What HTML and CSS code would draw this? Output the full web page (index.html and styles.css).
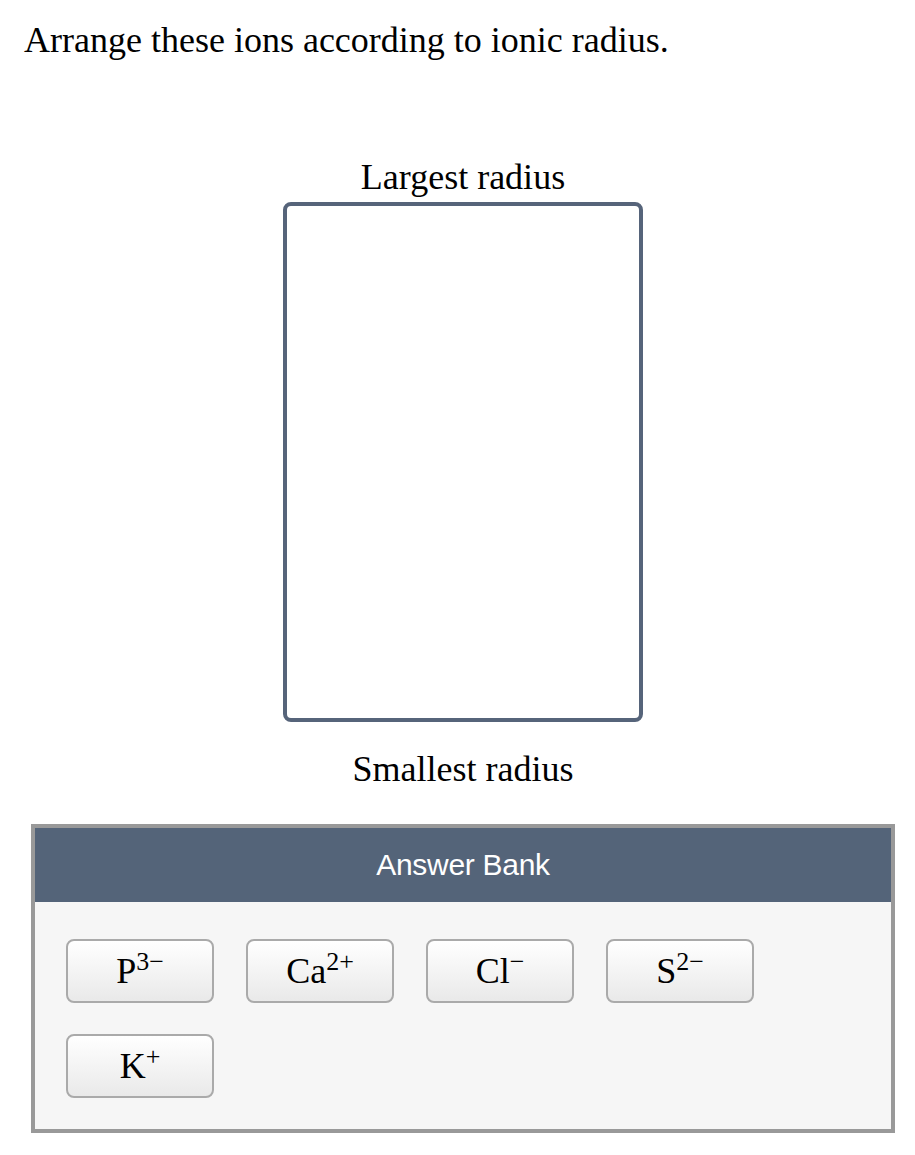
FILE: index.html
```html
<!DOCTYPE html>
<html>
  <head>
    <meta charset="utf-8">
    <title>Ionic radius</title>
    <link rel="stylesheet" href="styles.css">
  </head>
  <body>
    <p class="question">Arrange these ions according to ionic radius.</p>
    <div class="ranking">
      <div class="label">Largest radius</div>
      <div class="dropzone"></div>
      <div class="label">Smallest radius</div>
    </div>
    <div class="bank">
      <div class="bank-head">Answer Bank</div>
      <div class="bank-items">
        <div class="ion">P<sup>3&minus;</sup></div>
        <div class="ion">Ca<sup>2+</sup></div>
        <div class="ion">Cl<sup>&minus;</sup></div>
        <div class="ion">S<sup>2&minus;</sup></div>
        <div class="ion">K<sup>+</sup></div>
      </div>
    </div>
  </body>
</html>
```
FILE: styles.css
```css
body {
  margin: 0;
  background: #fff;
  color: #000;
  font-family: "Liberation Serif", "Times New Roman", serif;
}
.question {
  margin: 0;
  padding: 20px 0 0 24px;
  font-size: 36px;
  line-height: 40px;
}
.ranking {
  width: 864px;
  margin: 97px 0 0 31px;
  display: flex;
  flex-direction: column;
  align-items: center;
}
.label {
  font-size: 36px;
  line-height: 40px;
}
.dropzone {
  width: 352px;
  height: 512px;
  margin: 5px 0 27px;
  border: 4px solid #56647a;
  border-radius: 8px;
}
.bank {
  width: 856px;
  margin: 35px 0 0 31px;
  border: 4px solid #999;
  background: #f6f6f6;
}
.bank-head {
  height: 74px;
  line-height: 74px;
  background: #546479;
  color: #fff;
  text-align: center;
  font-family: "Liberation Sans", Arial, sans-serif;
  font-size: 30px;
  letter-spacing: -0.3px;
}
.bank-items {
  display: flex;
  flex-wrap: wrap;
  gap: 31px 32px;
  padding: 37px 31px 31px;
}
.ion {
  box-sizing: border-box;
  width: 148px;
  height: 64px;
  border: 2px solid #aaa;
  border-radius: 8px;
  background: linear-gradient(#fff, #e9e9e9);
  font-size: 36px;
  line-height: 60px;
  text-align: center;
}
.ion sup {
  font-size: 26px;
  line-height: 0;
  vertical-align: 13px;
}
```
